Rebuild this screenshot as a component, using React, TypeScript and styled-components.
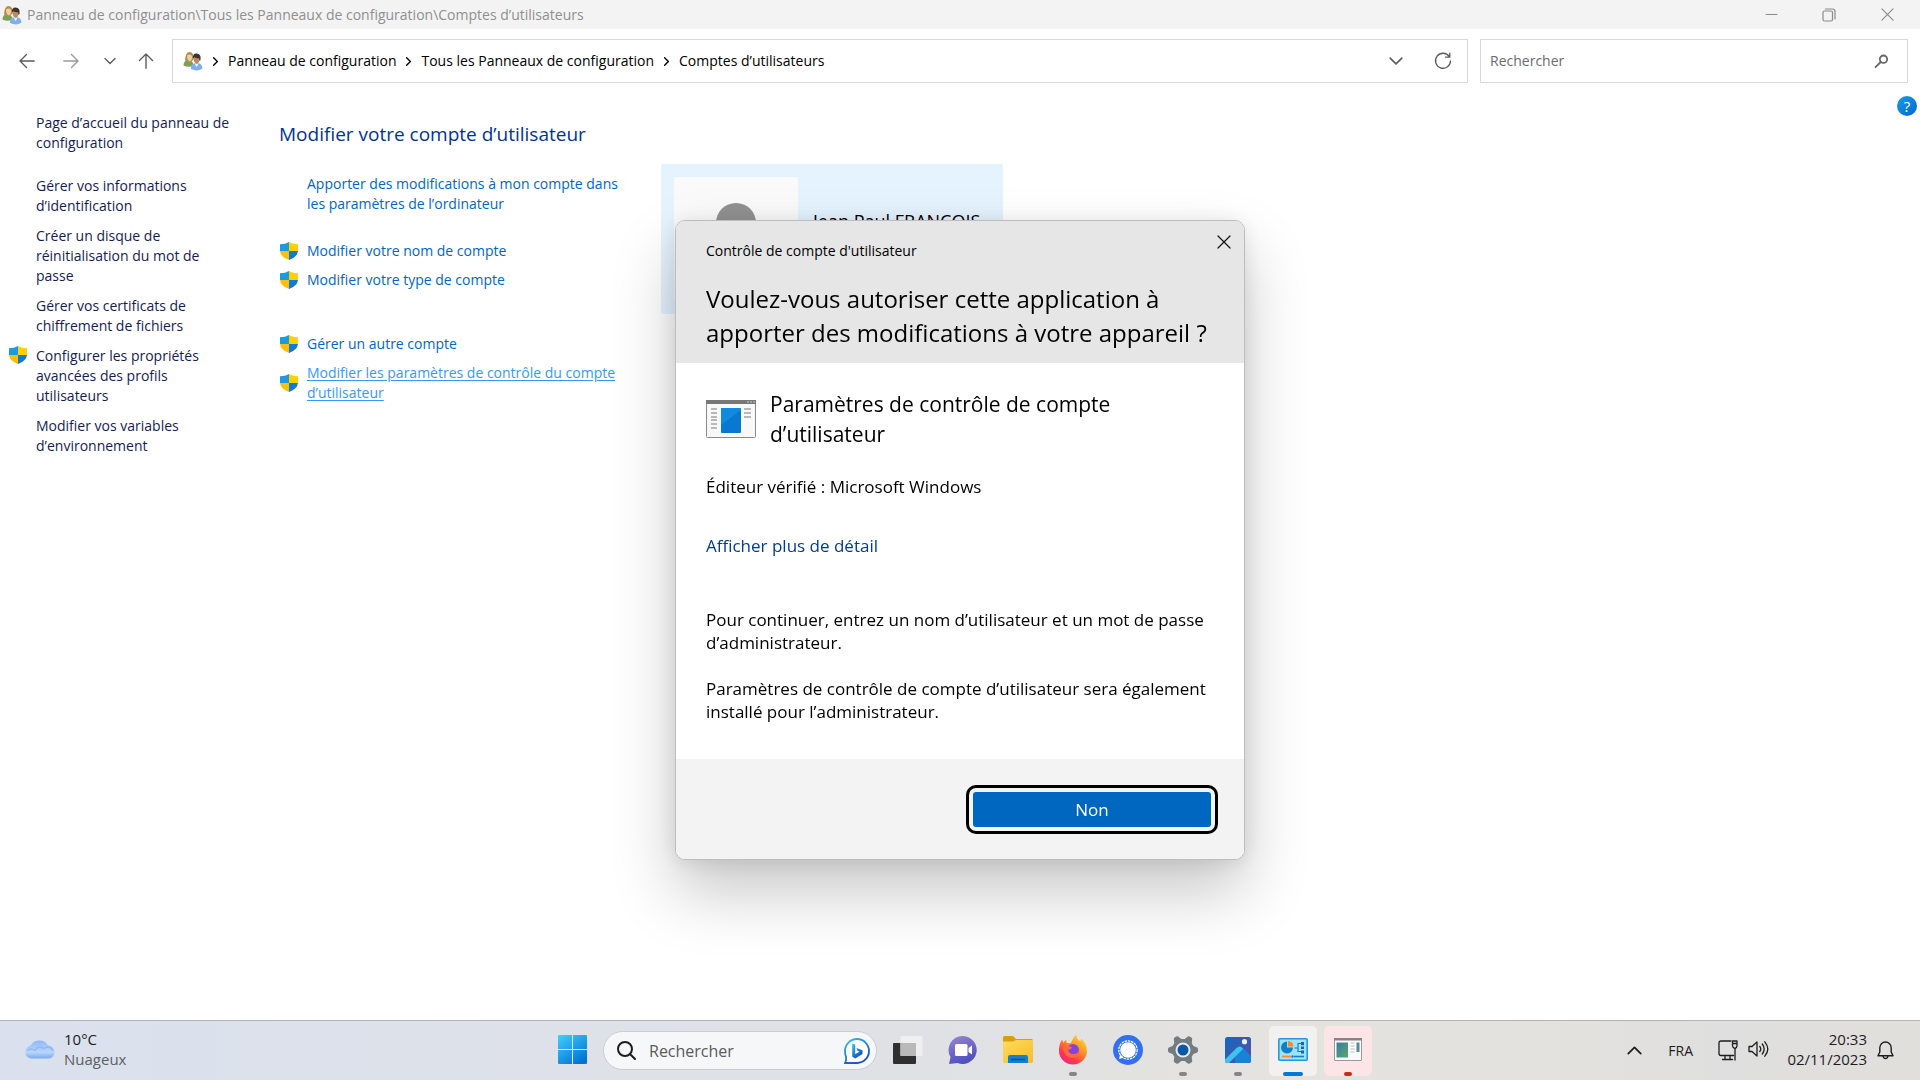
import React from "react";
import styled, { createGlobalStyle } from "styled-components";

const Global = createGlobalStyle`
  *, *::before, *::after { box-sizing: border-box; }
  html, body { margin: 0; padding: 0; }
  body {
    background: #fff;
    color: #000;
    font-family: "Open Sans", "Noto Sans", sans-serif;
    font-size: 14px;
    line-height: 20px;
  }
  button, input { font: inherit; color: inherit; }
  a { color: inherit; text-decoration: none; }
  p, h1, h2, ul { margin: 0; padding: 0; font-weight: 400; }
  ul { list-style: none; }
  svg { display: block; flex: none; }
`;

const Desktop = styled.div`
  display: flex;
  flex-direction: column;
  min-height: 100vh;
`;

/* ---------- Explorer window ---------- */

const TitleBar = styled.header`
  display: flex;
  align-items: center;
  justify-content: space-between;
  height: 29px;
  padding-left: 2px;
  background: #f3f3f3;
  color: #8f8f8f;
`;

const WindowTitle = styled.div`
  display: flex;
  align-items: center;
  gap: 5px;
`;

const PlainButton = styled.button<{ $w?: number; $tone?: string }>`
  display: flex;
  align-items: center;
  justify-content: center;
  width: ${(p) => p.$w ?? 32}px;
  padding: 0;
  border: 0;
  background: none;
  color: ${(p) => p.$tone ?? "#5c5c5c"};
`;

const WindowControls = styled.div`
  display: flex;
  align-self: stretch;
  padding-right: 4px;
`;

const NavBar = styled.nav`
  display: flex;
  align-items: center;
  padding: 10px 12px 0 6px;
`;

const NavButtons = styled.div`
  display: flex;
  align-items: center;
  width: 166px;
`;

const AddressBox = styled.div`
  display: flex;
  flex: 1;
  align-items: center;
  height: 44px;
  padding: 0 8px 0 10px;
  border: 1px solid #d9d9d9;
`;

const Crumbs = styled.div`
  display: flex;
  flex: 1;
  align-items: center;
  gap: 8px;
`;

const SearchBox = styled.label`
  display: flex;
  align-items: center;
  width: 428px;
  height: 44px;
  margin-left: 12px;
  padding: 0 18px 0 9px;
  border: 1px solid #d9d9d9;
  color: #666;
`;

const BareInput = styled.input<{ $tone: string }>`
  flex: 1;
  min-width: 0;
  padding: 0;
  border: 0;
  outline: 0;
  background: none;
  &::placeholder { color: ${(p) => p.$tone}; opacity: 1; }
`;

const Content = styled.main`
  display: flex;
  flex: 1;
  align-items: flex-start;
  padding: 13px 3px 0 9px;
`;

const SideNav = styled.ul`
  display: flex;
  flex-direction: column;
  gap: 10px;
  width: 270px;
  padding-top: 17px;
  color: #151c55;
`;

const SideItem = styled.li<{ $first?: boolean }>`
  display: grid;
  grid-template-columns: 27px 200px;
  margin-bottom: ${(p) => (p.$first ? 13 : 0)}px;
`;

const SideLink = styled.a`
  grid-column: 2;
  grid-row: 1;
`;

const Account = styled.section`
  width: 382px;
  padding-top: 24px;
  color: #0066cc;
`;

const AccountTitle = styled.h1`
  margin-bottom: 26px;
  color: #003399;
  font-size: 19px;
  line-height: 28px;
`;

const TaskList = styled.ul<{ $gap?: number }>`
  display: flex;
  flex-direction: column;
  gap: 9px;
  margin-top: ${(p) => p.$gap ?? 0}px;
  padding-left: 1px;
`;

const Task = styled.li`
  display: grid;
  grid-template-columns: 27px 326px;
  align-items: center;
`;

const TaskLink = styled.a<{ $hot?: boolean }>`
  grid-column: 2;
  color: ${(p) => (p.$hot ? "#3399ff" : "inherit")};
  text-decoration: ${(p) => (p.$hot ? "underline" : "none")};
  text-underline-offset: 2px;
`;

const UserCard = styled.section`
  display: flex;
  gap: 15px;
  width: 342px;
  height: 150px;
  margin-top: 68px;
  padding: 13px;
  border-radius: 2px;
  background: #e5f3ff;
`;

const UserName = styled.h2`
  padding-top: 32px;
  font-size: 18px;
  line-height: 24px;
  white-space: nowrap;
`;

const HelpButton = styled.button`
  width: 20px;
  height: 20px;
  margin-left: auto;
  padding: 0;
  border: 0;
  border-radius: 50%;
  background: linear-gradient(135deg, #1b9de2, #0067d6);
  color: #fff;
  font-size: 15px;
  line-height: 20px;
`;

/* ---------- Consent dialog ---------- */

const Overlay = styled.div`
  position: fixed;
  inset: 0;
  display: flex;
  align-items: center;
  justify-content: center;
`;

const Dialog = styled.section`
  width: 570px;
  overflow: hidden;
  border: 1px solid #bdbdbd;
  border-radius: 10px;
  background: #fff;
  box-shadow: 0 32px 64px rgba(0, 0, 0, 0.22), 0 2px 21px rgba(0, 0, 0, 0.1);
`;

const DialogHead = styled.header`
  padding: 4px 4px 13px 30px;
  background: #e6e6e6;
`;

const DialogBar = styled.div`
  display: flex;
  align-items: flex-start;
  justify-content: space-between;
  height: 57px;
`;

const DialogCaption = styled.p`
  padding-top: 16px;
`;

const DialogClose = styled(PlainButton)`
  height: 34px;
`;

const Question = styled.h1`
  font-size: 24px;
  line-height: 34px;
`;

const DialogBody = styled.div`
  display: flex;
  flex-direction: column;
  align-items: flex-start;
  padding: 26px 30px 36px;
  font-size: 17px;
  line-height: 23px;
`;

const Program = styled.div`
  display: flex;
  align-items: center;
  gap: 14px;
  margin-bottom: 26px;
`;

const ProgramName = styled.h2`
  width: 380px;
  font-size: 21px;
  line-height: 30px;
`;

const DetailLink = styled.a`
  margin: 36px 0 51px;
  color: #003e92;
`;

const Note = styled.p`
  & + & { margin-top: 23px; }
`;

const DialogFoot = styled.footer`
  display: flex;
  justify-content: flex-end;
  padding: 33px 33px 32px;
  background: #f3f3f3;
`;

const NoButton = styled.button`
  width: 238px;
  height: 35px;
  padding: 0;
  border: 0;
  border-radius: 3px;
  outline: 3px solid #000;
  outline-offset: 4px;
  background: #0067c0;
  color: #fff;
  font-size: 17px;
`;

/* ---------- Taskbar ---------- */

const Taskbar = styled.footer`
  display: grid;
  grid-template-columns: 1fr auto 1fr;
  align-items: center;
  height: 60px;
  border-top: 1px solid #b4b4b4;
  background: linear-gradient(90deg, #dae1ee 0%, #dde1ea 22%, #e0e1e5 48%, #e4e3df 66%, #e2e1de 83%, #dfdfdf 90%, #e1dfdb 100%);
  color: #1d1d1d;
  font-size: 15px;
`;

const Weather = styled.div`
  display: flex;
  align-items: center;
  gap: 9px;
  padding: 0 0 4px 25px;
`;

const Muted = styled.div`
  color: #5d5f63;
`;

const Apps = styled.div`
  display: flex;
  align-items: center;
  gap: 7px;
`;

const TaskSearch = styled.label`
  display: flex;
  align-items: center;
  gap: 13px;
  width: 274px;
  height: 39px;
  padding: 0 6px 0 13px;
  border: 1px solid #cbccce;
  border-radius: 20px;
  background: #f6f7f9;
  font-size: 16px;
`;

const AppButton = styled.button<{ $bg?: string; $dot?: string; $wide?: boolean }>`
  position: relative;
  display: flex;
  align-items: center;
  justify-content: center;
  width: 48px;
  height: 50px;
  padding: 0 0 2px;
  border: 0;
  border-radius: 5px;
  background: ${(p) => p.$bg ?? "none"};
  &::after {
    content: "";
    position: absolute;
    bottom: 0;
    left: 50%;
    width: ${(p) => (p.$wide ? 20 : 8)}px;
    height: 4px;
    border-radius: 2px;
    background: ${(p) => p.$dot ?? "none"};
    transform: translateX(-50%);
  }
`;

const Tray = styled.div`
  display: flex;
  align-items: center;
  justify-content: flex-end;
  padding-right: 26px;
`;

const Language = styled.button`
  margin: 0 25px 0 27px;
  padding: 0;
  border: 0;
  background: none;
  font-size: 14px;
`;

const Clock = styled.time`
  width: 98px;
  margin-right: 10px;
  padding-bottom: 3px;
  text-align: right;
`;

const TrayPair = styled.div`
  display: flex;
  gap: 10px;
`;

/* ---------- Icons ---------- */

const stroke = { fill: "none", stroke: "currentColor", strokeLinecap: "round", strokeLinejoin: "round" } as const;

const People = () => (
  <svg width="20" height="20" viewBox="0 0 20 20">
    <path d="M.5 14.500q0-5 4.500-5.500q5 0 5.500 5.500q-5 2.500-10 0z" fill="#7f9f52" />
    <path d="M2 9.500q.5-8.500 4.500-8.500q4.500 0 4 7.500q-1 2-3.500 2z" fill="#b08d4a" />
    <path d="M4 4.500q2.500-2 5 .5q.3 4.500-2.200 5.500Q4 9.500 4 4.500z" fill="#f0cda2" />
    <path d="M8 18q-.5-5.500 5-6q6-.5 6.500 5.500q-5 3.500-11.500.5z" fill="#7db0ea" />
    <path d="M11.500 12.300l2.200 4l2-4z" fill="#edf4fb" />
    <path d="M10.500 7q2-3 6 0q.3 5-2.700 6q-3.300-.8-3.300-6z" fill="#c08a60" />
    <path d="M10 7.500q-.6-5 3.500-5q5 0 4 6.500l-1 1l-.5-2.800q-3 .3-4.500-1z" fill="#3c3231" />
  </svg>
);

const Shield = () => (
  <svg width="18" height="18" viewBox="0 0 18 18">
    <path d="M9 0Q5.500 2.200 0 2.300V9H9z" fill="#1a9be0" />
    <path d="M9 0q3.500 2.200 9 2.300V9H9z" fill="#ffd000" />
    <path d="M0 9H9v9Q.8 15.300 0 9z" fill="#fdbf00" />
    <path d="M18 9H9v9q8.200-2.700 9-9z" fill="#0f7bd4" />
  </svg>
);

const Arrow = ({ turn = 0 }: { turn?: number }) => (
  <svg width="16" height="16" viewBox="0 0 16 16" {...stroke} strokeWidth="1.400">
    <path d="M15.200 8H1M7.500 1.500L1 8L7.500 14.500" transform={`rotate(${turn} 8 8)`} />
  </svg>
);

const Chevron = ({ w = 12, turn = 0, weight = 1.4 }: { w?: number; turn?: number; weight?: number }) => (
  <svg width={w} height={w} viewBox="0 0 12 12" {...stroke} strokeWidth={weight}>
    <path d="M1 3.500L6 8.500L11 3.500" transform={`rotate(${turn} 6 6)`} />
  </svg>
);

const Cross = ({ w }: { w: number }) => (
  <svg width={w} height={w} viewBox="0 0 14 14" {...stroke} strokeWidth="1.200">
    <path d="M1 1L13 13M13 1L1 13" />
  </svg>
);

const Restore = () => (
  <svg width="14" height="14" viewBox="0 0 14 14" {...stroke} strokeWidth="1.200">
    <rect x="1" y="3" width="9.500" height="10" rx="1.500" />
    <path d="M3.500 1H10.500Q13 1 13 3.500V11" />
  </svg>
);

const Refresh = () => (
  <svg width="18" height="18" viewBox="0 0 18 18" {...stroke} strokeWidth="1.300">
    <path d="M15.200 4.500A7.500 7.500 0 1 0 16.500 9M15.800 1.200V5.200H11.500" />
  </svg>
);

const Loupe = () => (
  <svg width="15" height="15" viewBox="0 0 15 15" {...stroke} strokeWidth="1.800">
    <circle cx="9.500" cy="5.200" r="3.700" />
    <path d="M6.800 8L1.500 13.200" />
  </svg>
);

const Portrait = () => (
  <svg width="124" height="124" viewBox="0 0 124 124">
    <rect width="124" height="124" fill="#fafafa" />
    <circle cx="62" cy="46" r="20" fill="#919191" />
    <path d="M30 94q0-22 32-22t32 22z" fill="#919191" />
  </svg>
);

const ProgramIcon = () => (
  <svg width="50" height="38" viewBox="0 0 50 38">
    <rect x=".5" y=".5" width="49" height="37" rx="1" fill="#f8f8f8" stroke="#8b8b8b" />
    <path d="M0 0h50v4H0z" fill="#777" />
    <path d="M41 2h2M44 2h2M47 2h2" stroke="#ccc" />
    <path d="M5 9h6M5 13h6M5 17h6M5 20h6M5 24h6M5 28h6M38 9h7M38 13h7M38 17h7" stroke="#a2a2a2" strokeWidth="1.300" />
    <rect x="15" y="8" width="20" height="25" rx="1" fill="#0878d0" />
    <path d="M15 25L35 10V9q0-1-1-1H16q-1 0-1 1z" fill="#118ade" />
  </svg>
);

const Cloud = () => (
  <svg width="30" height="21" viewBox="0 0 30 21">
    <defs>
      <linearGradient id="cloud" x1="0" y1="0" x2="0" y2="1">
        <stop offset="0" stopColor="#8fb9f8" />
        <stop offset=".65" stopColor="#b9d5fc" />
        <stop offset="1" stopColor="#7ba9ec" />
      </linearGradient>
    </defs>
    <path d="M6.500 20.500a6.500 6.500 0 0 1-.8-12.900A9.500 8.500 0 0 1 23 7.500a6.500 6.500 0 0 1 .5 13z" fill="url(#cloud)" />
    <path d="M2 12.500q4-3 8 0q3-5.500 9-2q5-4 9 2" fill="none" stroke="#86b0f0" strokeWidth="1.500" opacity=".7" />
  </svg>
);

const Start = () => (
  <svg width="29" height="29" viewBox="0 0 29 29">
    <defs>
      <linearGradient id="win" x1="0" y1="0" x2=".7" y2="1">
        <stop offset="0" stopColor="#43d0fb" />
        <stop offset="1" stopColor="#0074d6" />
      </linearGradient>
    </defs>
    <path d="M1 0H14V14H0V1q0-1 1-1zM15 0H28q1 0 1 1V14H15zM0 15H14V29H1q-1 0-1-1zM15 15H29V28q0 1-1 1H15z" fill="url(#win)" />
  </svg>
);

const TaskLoupe = () => (
  <svg width="19" height="19" viewBox="0 0 19 19" {...stroke} strokeWidth="2">
    <circle cx="8" cy="8" r="7" />
    <path d="M13.200 13.200L18 18" />
  </svg>
);

const Bing = () => (
  <svg width="26" height="26" viewBox="0 0 26 26">
    <defs>
      <linearGradient id="bing" x1="0" y1="0" x2=".6" y2="1">
        <stop offset="0" stopColor="#2fc2f5" />
        <stop offset="1" stopColor="#174fc0" />
      </linearGradient>
    </defs>
    <path d="M1 25q1.500-2.500 1-6Q1 16 1 13A12 12 0 1 1 13 25z" fill="#fff" stroke="url(#bing)" strokeWidth="1.800" />
    <path d="M8.200 5.500l3 1.200V16l4.300-2.300-2-1-1-2.700 6 2.200V16l-7.300 4.500-3-1.700z" fill="url(#bing)" />
  </svg>
);

const TaskView = () => (
  <svg width="30" height="28" viewBox="0 0 30 28">
    <rect y="7" width="23" height="21" rx="1" fill="#2f2f2f" />
    <rect x="7.500" y="0" width="22" height="20" rx="1" fill="#efefef" />
    <path d="M7.500 7H23V20H7.500z" fill="#b9b9b9" />
  </svg>
);

const Chat = () => (
  <svg width="30" height="30" viewBox="0 0 30 30">
    <defs>
      <linearGradient id="chat" x1="0" y1="0" x2=".4" y2="1">
        <stop offset="0" stopColor="#9a86cf" />
        <stop offset="1" stopColor="#4f51c0" />
      </linearGradient>
    </defs>
    <path d="M15 1a14 14 0 1 1-5.500 27L1 29l1.500-7A14 14 0 0 1 15 1z" fill="url(#chat)" />
    <rect x="7" y="9" width="12.500" height="12" rx="1.500" fill="#fff" />
    <path d="M20.500 13l3.500-2.500v9l-3.500-2.500z" fill="#fff" />
  </svg>
);

const Folder = () => (
  <svg width="30" height="27" viewBox="0 0 30 27">
    <defs>
      <linearGradient id="folder" x1="0" y1="0" x2="1" y2="1">
        <stop offset="0" stopColor="#ffdc5c" />
        <stop offset="1" stopColor="#f8bc25" />
      </linearGradient>
    </defs>
    <path d="M0 1.500Q0 0 1.500 0H10l3 3H28.500Q30 3 30 5V12H0z" fill="#dc9c0c" />
    <path d="M0 5.500H10L13 4H30V25.500Q30 27 28.500 27H1.500Q0 27 0 25.500z" fill="url(#folder)" />
    <path d="M5 27V21q0-2 2-2H23q2 0 2 2V27z" fill="#1180d4" />
    <path d="M8 23.500H22" stroke="#0a4f94" strokeWidth="1.500" />
  </svg>
);

const Firefox = () => (
  <svg width="30" height="30" viewBox="0 0 30 30">
    <defs>
      <linearGradient id="fox" x1=".9" y1="0" x2=".2" y2="1">
        <stop offset="0" stopColor="#ffe43c" />
        <stop offset=".45" stopColor="#ff8b24" />
        <stop offset=".75" stopColor="#ff3550" />
        <stop offset="1" stopColor="#f0248c" />
      </linearGradient>
    </defs>
    <path d="M18.500 0q0 4 3.500 6q1.500-1 1-2.500q6 5 6 12.500a14 13.500 0 0 1-28 0Q1 9 4 4.500L5.500 8q1-2.500 2.500-3l.8 3L13 8q2-6 5.500-8z" fill="url(#fox)" />
    <circle cx="15" cy="15" r="6" fill="#8642dc" />
    <path d="M4.500 12q5-2 9.500.5q-1 2-4 2.500q1 4 5.500 4q4 0 6-3q-.5 6.500-7.500 7Q6.500 23 4.500 12z" fill="#ff6a36" />
  </svg>
);

const Signal = () => (
  <svg width="30" height="30" viewBox="0 0 30 30">
    <circle cx="15" cy="15" r="15" fill="#3370ef" />
    <circle cx="15" cy="15" r="9.200" fill="none" stroke="#fff" strokeWidth="1.200" strokeDasharray="2.500 .8" />
    <circle cx="15" cy="15" r="7.800" fill="#fff" />
    <path d="M6 24l1.200-4.500l3.300 3.300z" fill="#fff" />
  </svg>
);

const Gear = () => (
  <svg width="30" height="30" viewBox="0 0 30 30">
    <g fill="#747b81">
      <circle cx="15" cy="15" r="11" />
      {[0, 60, 120].map((turn) => (
        <path key={turn} d="M0 14q0-1.500 2-2L6 10.500H24L28 12q2 .5 2 2V16q0 1.500-2 2L24 19.500H6L2 18Q0 17.500 0 16z" transform={`rotate(${turn} 15 15)`} />
      ))}
    </g>
    <circle cx="15" cy="15" r="7.500" fill="#e5edf3" />
    <circle cx="15" cy="15" r="5.500" fill="#0b57a8" />
  </svg>
);

const Photos = () => (
  <svg width="26" height="26" viewBox="0 0 26 26">
    <defs>
      <linearGradient id="sky" x1="0" y1="0" x2="1" y2="1">
        <stop offset="0" stopColor="#1268bd" />
        <stop offset="1" stopColor="#5c4da6" />
      </linearGradient>
      <clipPath id="frame"><rect width="26" height="26" rx="2.500" /></clipPath>
    </defs>
    <g clipPath="url(#frame)">
      <rect width="26" height="26" fill="url(#sky)" />
      <path d="M10 14L13 11q2.500-2 5 0L26 19V26H10z" fill="#1583d8" />
      <path d="M0 22.500L11.500 11q2.500-2.500 5-1L18 12L4 26H0z" fill="#3cc3f2" />
      <circle cx="19.500" cy="4.700" r="2.600" fill="#e9f1fa" />
    </g>
  </svg>
);

const ControlPanel = () => (
  <svg width="30" height="23" viewBox="0 0 30 23">
    <rect x=".8" y=".8" width="28.400" height="21.400" rx="1" fill="#a0e2fa" stroke="#1d9ae0" strokeWidth="1.600" />
    <path d="M9 3.500V9.500H15a6 6 0 1 1-6-6z" fill="#117fd0" />
    <path d="M10 3a5.500 5.500 0 0 1 5.500 5.500H10z" fill="#f98a1c" />
    <path d="M4 18.500H13" stroke="#f98a1c" strokeWidth="1.600" />
    <path d="M16 18.500h10" stroke="#117fd0" strokeWidth="1.600" />
    <path d="M16.500 10h3.500V5.500h3M20 10v3.500h3" fill="none" stroke="#117fd0" strokeWidth="1.200" />
    <path d="M23 4h3v3.200h-3zM23 8.500h3v2.500h-3zM23 12.500h3v3h-3z" fill="#1267b5" />
    <circle cx="14.500" cy="18.500" r="1.200" fill="#117fd0" />
  </svg>
);

const ConsentIcon = () => (
  <svg width="28" height="23" viewBox="0 0 28 23">
    <rect x=".5" y=".5" width="27" height="22" rx=".5" fill="#fafafa" stroke="#999" />
    <path d="M0 0H28V2.500H0z" fill="#858585" />
    <defs>
      <linearGradient id="consent" x1="0" y1="0" x2="1" y2="1">
        <stop offset="0" stopColor="#3c7f9f" />
        <stop offset="1" stopColor="#5aa56c" />
      </linearGradient>
    </defs>
    <path d="M2.500 4.500H14V19.500H2.500z" fill="url(#consent)" />
    <path d="M16.500 5h4M16.500 8h4M16.500 11h4M16.500 14h4" stroke="#c2c2c2" />
    <path d="M22.500 4.500H25.500V14H22.500z" fill="#568a98" />
  </svg>
);

const NetworkIcon = () => (
  <svg width="20" height="21" viewBox="0 0 20 21" {...stroke} strokeWidth="1.300">
    <path d="M13 1H3Q1 1 1 3V13.500q0 2 2 2H15.500M7 15.500V19.500M12 15.500V19.500M4.500 19.500H14.500M17 8.500V20" />
    <path d="M14.500 1H19V5.500q0 2-2 3q-2.500-1-2.500-3zM14.500 3.500H19" />
  </svg>
);

const Speaker = () => (
  <svg width="21" height="18" viewBox="0 0 21 18" {...stroke} strokeWidth="1.300">
    <path d="M1 6.500H4L9 2V16L4 11.500H1zM11.800 6.500q2 2.500 0 5M14.300 4q3.700 5 0 10M16.800 1.800q6 7.200 0 14.400" />
  </svg>
);

const Bell = () => (
  <svg width="17" height="19" viewBox="0 0 17 19" {...stroke} strokeWidth="1.400">
    <path d="M8.500 1a5.700 5.700 0 0 0-5.700 5.700V11L1 14.800H16L14.200 11V6.700A5.700 5.700 0 0 0 8.500 1zM6 15q.3 2.500 2.500 2.500T11 15" />
  </svg>
);

/* ---------- Data ---------- */

const crumbs = ["Panneau de configuration", "Tous les Panneaux de configuration", "Comptes d’utilisateurs"];

const sideLinks = [
  { text: "Page d’accueil du panneau de configuration" },
  { text: "Gérer vos informations d’identification" },
  { text: "Créer un disque de réinitialisation du mot de passe" },
  { text: "Gérer vos certificats de chiffrement de fichiers" },
  { text: "Configurer les propriétés avancées des profils utilisateurs", shield: true },
  { text: "Modifier vos variables d’environnement" },
];

const apps = [
  { name: "Vue des tâches", icon: <TaskView /> },
  { name: "Conversation", icon: <Chat /> },
  { name: "Explorateur de fichiers", icon: <Folder /> },
  { name: "Firefox", icon: <Firefox />, dot: "#858585" },
  { name: "Signal", icon: <Signal /> },
  { name: "Paramètres", icon: <Gear />, dot: "#858585" },
  { name: "Photos", icon: <Photos />, dot: "#858585" },
  { name: "Panneau de configuration", icon: <ControlPanel />, dot: "#0078d7", bg: "#f2f1f0", wide: true },
  { name: "Contrôle de compte", icon: <ConsentIcon />, dot: "#c72b1e", bg: "#fde5e7" },
];

export default function App() {
  return (
    <Desktop>
      <Global />
      <TitleBar>
        <WindowTitle>
          <People />
          Panneau de configuration\Tous les Panneaux de configuration\Comptes d’utilisateurs
        </WindowTitle>
        <WindowControls>
          <PlainButton $w={58} $tone="#8a8a8a" aria-label="Réduire">
            <svg width="13" height="13" viewBox="0 0 13 13" {...stroke}><path d="M1 6.500H12" /></svg>
          </PlainButton>
          <PlainButton $w={58} $tone="#8a8a8a" aria-label="Restaurer"><Restore /></PlainButton>
          <PlainButton $w={58} $tone="#8a8a8a" aria-label="Fermer"><Cross w={13} /></PlainButton>
        </WindowControls>
      </TitleBar>

      <NavBar aria-label="Navigation">
        <NavButtons>
          <PlainButton $w={42} aria-label="Précédent"><Arrow /></PlainButton>
          <PlainButton $w={46} $tone="#999" aria-label="Suivant"><Arrow turn={180} /></PlainButton>
          <PlainButton $w={32} aria-label="Emplacements récents"><Chevron /></PlainButton>
          <PlainButton $w={40} aria-label="Dossier parent"><Arrow turn={90} /></PlainButton>
        </NavButtons>
        <AddressBox>
          <Crumbs>
            <People />
            {crumbs.map((c) => (
              <React.Fragment key={c}>
                <Chevron w={9} turn={-90} weight={1.8} />
                <a href="#">{c}</a>
              </React.Fragment>
            ))}
          </Crumbs>
          <PlainButton $w={62} aria-label="Historique"><Chevron w={14} /></PlainButton>
          <PlainButton $w={32} aria-label="Actualiser"><Refresh /></PlainButton>
        </AddressBox>
        <SearchBox>
          <BareInput $tone="#6b6b6b" placeholder="Rechercher" aria-label="Rechercher dans le panneau" />
          <Loupe />
        </SearchBox>
      </NavBar>

      <Content>
        <SideNav>
          {sideLinks.map((l, i) => (
            <SideItem key={l.text} $first={i === 0}>
              {l.shield && <Shield />}
              <SideLink href="#">{l.text}</SideLink>
            </SideItem>
          ))}
        </SideNav>
        <Account>
          <AccountTitle>Modifier votre compte d’utilisateur</AccountTitle>
          <TaskList>
            <Task><TaskLink href="#">Apporter des modifications à mon compte dans les paramètres de l’ordinateur</TaskLink></Task>
          </TaskList>
          <TaskList $gap={27}>
            <Task><Shield /><TaskLink href="#">Modifier votre nom de compte</TaskLink></Task>
            <Task><Shield /><TaskLink href="#">Modifier votre type de compte</TaskLink></Task>
          </TaskList>
          <TaskList $gap={44}>
            <Task><Shield /><TaskLink href="#">Gérer un autre compte</TaskLink></Task>
            <Task><Shield /><TaskLink href="#" $hot>Modifier les paramètres de contrôle du compte d’utilisateur</TaskLink></Task>
          </TaskList>
        </Account>
        <UserCard>
          <Portrait />
          <UserName>Jean Paul FRANCOIS</UserName>
        </UserCard>
        <HelpButton aria-label="Aide">?</HelpButton>
      </Content>

      <Taskbar>
        <Weather>
          <Cloud />
          <div>
            10°C
            <Muted>Nuageux</Muted>
          </div>
        </Weather>
        <Apps>
          <AppButton aria-label="Démarrer"><Start /></AppButton>
          <TaskSearch>
            <TaskLoupe />
            <BareInput $tone="#5a5a5a" placeholder="Rechercher" aria-label="Rechercher" />
            <Bing />
          </TaskSearch>
          {apps.map((a) => (
            <AppButton key={a.name} aria-label={a.name} $bg={a.bg} $dot={a.dot} $wide={a.wide}>{a.icon}</AppButton>
          ))}
        </Apps>
        <Tray>
          <PlainButton $w={14} $tone="#1d1d1d" aria-label="Icônes masquées"><Chevron w={15} turn={180} /></PlainButton>
          <Language>FRA</Language>
          <TrayPair><NetworkIcon /><Speaker /></TrayPair>
          <Clock>20:33<br />02/11/2023</Clock>
          <Bell />
        </Tray>
      </Taskbar>

      <Overlay>
        <Dialog role="dialog" aria-labelledby="question">
          <DialogHead>
            <DialogBar>
              <DialogCaption>Contrôle de compte d'utilisateur</DialogCaption>
              <DialogClose $w={32} $tone="#111" aria-label="Fermer la boîte de dialogue"><Cross w={14} /></DialogClose>
            </DialogBar>
            <Question id="question">Voulez-vous autoriser cette application à apporter des modifications à votre appareil ?</Question>
          </DialogHead>
          <DialogBody>
            <Program>
              <ProgramIcon />
              <ProgramName>Paramètres de contrôle de compte d’utilisateur</ProgramName>
            </Program>
            <p>Éditeur vérifié : Microsoft Windows</p>
            <DetailLink href="#">Afficher plus de détail</DetailLink>
            <Note>Pour continuer, entrez un nom d’utilisateur et un mot de passe d’administrateur.</Note>
            <Note>Paramètres de contrôle de compte d’utilisateur sera également installé pour l’administrateur.</Note>
          </DialogBody>
          <DialogFoot>
            <NoButton>Non</NoButton>
          </DialogFoot>
        </Dialog>
      </Overlay>
    </Desktop>
  );
}
